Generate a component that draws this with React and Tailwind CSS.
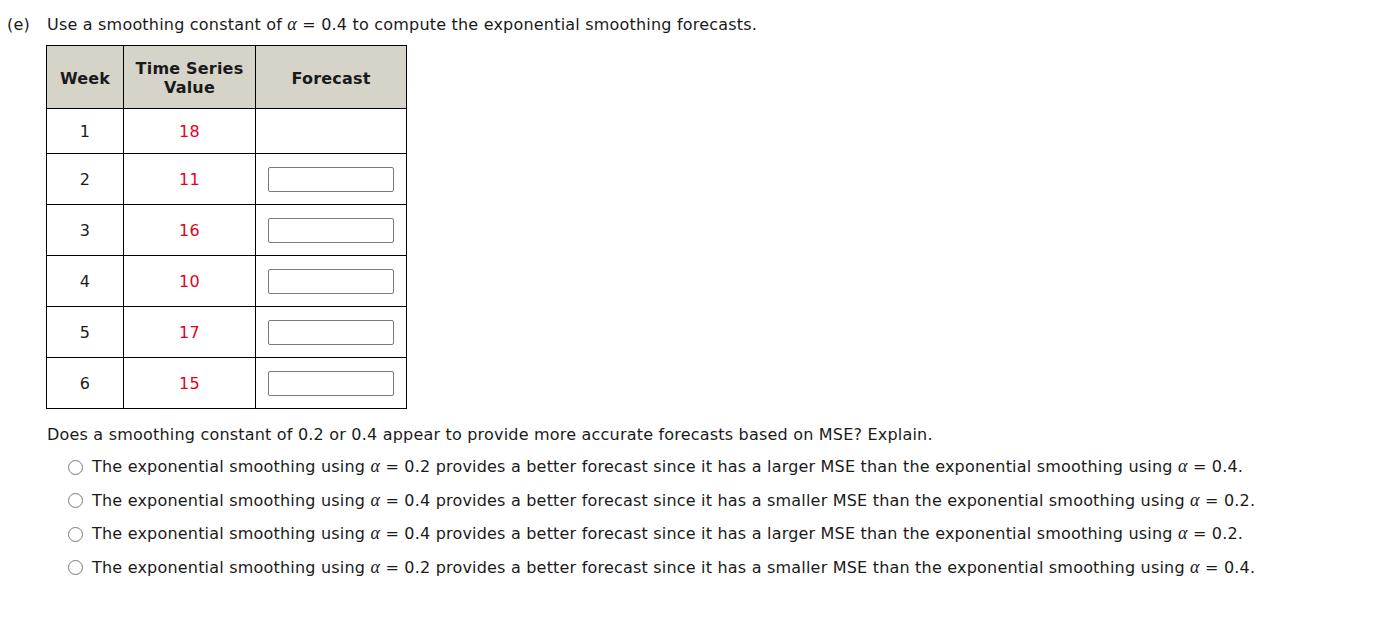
import React from 'react';

const Alpha = () => (
    <span className="italic text-[18px] leading-none" style={{ fontFamily: '"Liberation Serif", serif' }}>α</span>
);

const rows = [
    { week: 1, value: 18, input: false },
    { week: 2, value: 11, input: true },
    { week: 3, value: 16, input: true },
    { week: 4, value: 10, input: true },
    { week: 5, value: 17, input: true },
    { week: 6, value: 15, input: true },
];

const options = [
    ['0.2', 'larger', '0.4'],
    ['0.4', 'smaller', '0.2'],
    ['0.4', 'larger', '0.2'],
    ['0.2', 'smaller', '0.4'],
];

export default function App() {
    return (
        <div className="min-h-screen bg-white text-[16px] tracking-[0.2px] text-[#1a1a1a]" style={{ fontFamily: '"DejaVu Sans", Verdana, sans-serif' }}>
            <div className="pt-[14px] pl-[7px] flex leading-[22px]">
                <span className="w-[40px]">(e)</span>
                <span>Use a smoothing constant of <Alpha /> = 0.4 to compute the exponential smoothing forecasts.</span>
            </div>

            <div className="pl-[46px] pt-[9px]">
                <table className="border-collapse border border-black text-center">
                    <thead>
                        <tr className="bg-[#d6d3c9] h-[63px]">
                            <th className="border border-black w-[77px] font-bold pt-[3px]">Week</th>
                            <th className="border border-black w-[132px] font-bold leading-[19px] pt-[2px]">Time Series<br />Value</th>
                            <th className="border border-black w-[151px] font-bold pt-[3px]">Forecast</th>
                        </tr>
                    </thead>
                    <tbody>
                        {rows.map((r) => (
                            <tr key={r.week} className={r.input ? 'h-[51px]' : 'h-[45px]'}>
                                <td className="border border-black pt-[1px]">{r.week}</td>
                                <td className="border border-black text-[#e4001b] pt-[1px]">{r.value}</td>
                                <td className="border border-black">
                                    {r.input && (
                                        <div className="flex justify-center">
                                            <input type="text" className="w-[126px] h-[25px] border border-[#7a7a7a] rounded-[2px] bg-white" />
                                        </div>
                                    )}
                                </td>
                            </tr>
                        ))}
                    </tbody>
                </table>
            </div>

            <div className="pl-[47px] pt-[15px]">
                <p className="leading-[22px]">Does a smoothing constant of 0.2 or 0.4 appear to provide more accurate forecasts based on MSE? Explain.</p>
                <div className="flex flex-col gap-[11.5px] pt-[10px] pl-[21px]">
                    {options.map(([a, cmp, b], i) => (
                        <label key={i} className="flex items-center gap-[9px] h-[22px]">
                            <span className="w-[15px] h-[15px] rounded-full border border-[#7a7a7a] bg-white shrink-0" />
                            <span>The exponential smoothing using <Alpha /> = {a} provides a better forecast since it has a {cmp} MSE than the exponential smoothing using <Alpha /> = {b}.</span>
                        </label>
                    ))}
                </div>
            </div>
        </div>
    );
}
